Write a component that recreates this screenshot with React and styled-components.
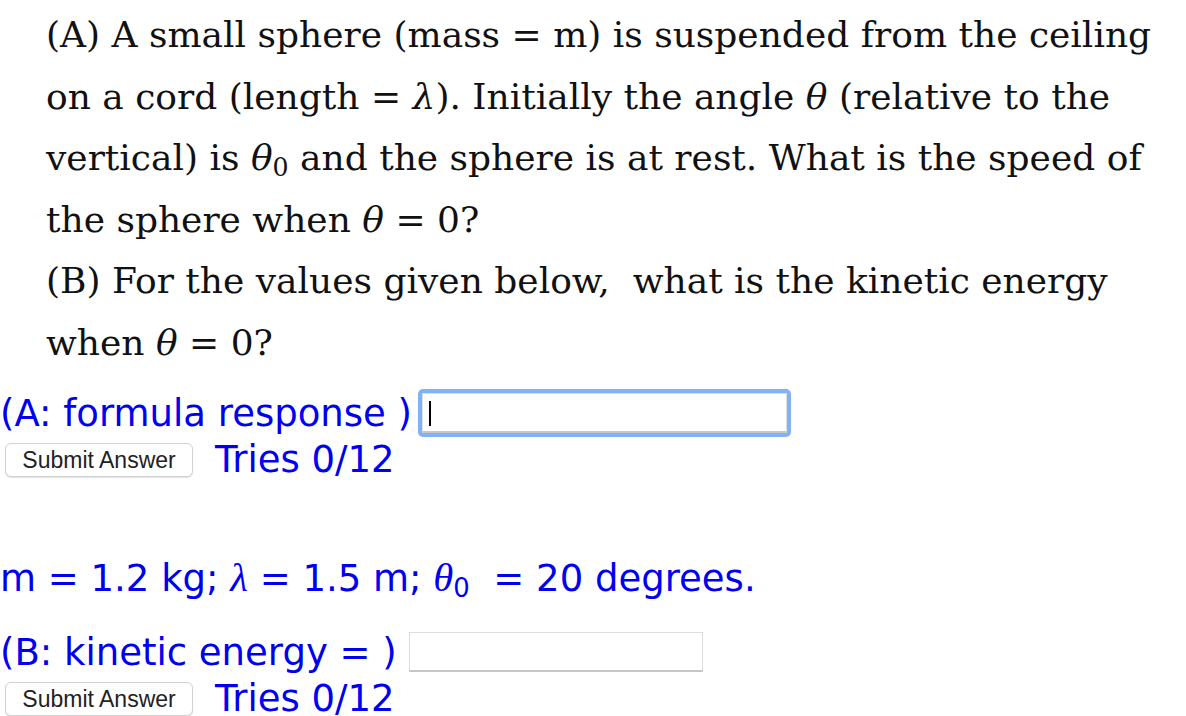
import React from "react";
import styled, { createGlobalStyle } from "styled-components";

const GlobalStyle = createGlobalStyle`
  html, body {
    margin: 0;
    padding: 0;
    background: #fff;
  }
`;

const Page = styled.div`
  width: 1186px;
  height: 716px;
  overflow: hidden;
`;

const Question = styled.div`
  padding: 4px 0 0 46px;
  font-family: "DejaVu Serif", "Liberation Serif", serif;
  font-size: 36px;
  line-height: 61.5px;
  color: #111;
  white-space: nowrap;
`;

const Var = styled.i`
  font-style: italic;
`;

const MathVar = styled.i`
  font-family: "Liberation Serif", serif;
  font-style: italic;
  font-size: 1.1em;
`;

const Sub = styled.sub`
  font-size: 0.7em;
  vertical-align: -0.25em;
  line-height: 0;
`;

const Blue = styled.div`
  font-family: "DejaVu Sans", Verdana, sans-serif;
  font-size: 37px;
  color: #0000f0;
  white-space: nowrap;
`;

const AnswerRow = styled(Blue)`
  display: flex;
  align-items: center;
  gap: ${({ $gap }) => $gap}px;
  margin-top: ${({ $top }) => $top}px;
  height: 50px;
`;

const Field = styled.div`
  position: relative;
  width: ${({ $w }) => $w}px;
  box-sizing: border-box;
  border-radius: ${({ $focus }) => ($focus ? "5px" : "0")};
  padding: ${({ $focus }) => ($focus ? "4px" : "0")};
  background: ${({ $focus }) => ($focus ? "#80b3f6" : "transparent")};
  height: ${({ $focus }) => ($focus ? "48px" : "40px")};
`;

const Input = styled.input`
  display: block;
  width: 100%;
  height: 100%;
  box-sizing: border-box;
  margin: 0;
  padding: 0 6px;
  border: 1px solid #dedede;
  border-bottom: 2px solid #c6c6c6;
  background: #fff;
  outline: none;
  font-size: 22px;
  caret-color: transparent;
`;

const Caret = styled.span`
  position: absolute;
  left: 11px;
  top: 12px;
  width: 2px;
  height: 25px;
  background: #000;
`;

const SubmitRow = styled.div`
  display: flex;
  align-items: center;
  gap: 22px;
  padding-left: 5px;
  margin-top: ${({ $top }) => $top}px;
`;

const Button = styled.button`
  height: 34px;
  width: 188px;
  padding: 0;
  box-sizing: border-box;
  border: 1px solid #d2d2d2;
  border-radius: 6px;
  background: #fff;
  box-shadow: 0 1px 1px rgba(0, 0, 0, 0.12);
  font-family: "Liberation Sans", Arial, sans-serif;
  font-size: 23px;
  color: #222;
`;

const Tries = styled(Blue)`
  line-height: 34px;
`;

const Values = styled(Blue)`
  margin-top: ${({ $top }) => $top}px;
  height: 50px;
  line-height: 50px;
`;

function AnswerBlock({ label, width, focus, top, gap }) {
  return (
    <>
      <AnswerRow $top={top} $gap={gap}>
        <span>{label}</span>
        <Field $w={width} $focus={focus}>
          <Input type="text" readOnly />
          {focus && <Caret />}
        </Field>
      </AnswerRow>
      <SubmitRow $top={5}>
        <Button>Submit Answer</Button>
        <Tries>Tries 0/12</Tries>
      </SubmitRow>
    </>
  );
}

export default function App() {
  return (
    <Page>
      <GlobalStyle />
      <Question>
        (A) A small sphere (mass = m) is suspended from the ceiling
        <br />
        on a cord (length = <Var>λ</Var>). Initially the angle <Var>θ</Var> (relative to the
        <br />
        vertical) is <Var>θ</Var>
        <Sub>0</Sub> and the sphere is at rest. What is the speed of
        <br />
        the sphere when <Var>θ</Var> = 0?
        <br />
        (B) For the values given below,&nbsp; what is the kinetic energy
        <br />
        when <Var>θ</Var> = 0?
      </Question>
      <AnswerBlock label="(A: formula response )" width={373} focus top={15} gap={6} />
      <Values $top={76}>
        m = 1.2 kg; <MathVar>λ</MathVar> = 1.5 m; <MathVar>θ</MathVar>
        <Sub>0</Sub>&nbsp; = 20 degrees.
      </Values>
      <AnswerBlock label="(B: kinetic energy = )" width={294} top={24} gap={12} />
    </Page>
  );
}
